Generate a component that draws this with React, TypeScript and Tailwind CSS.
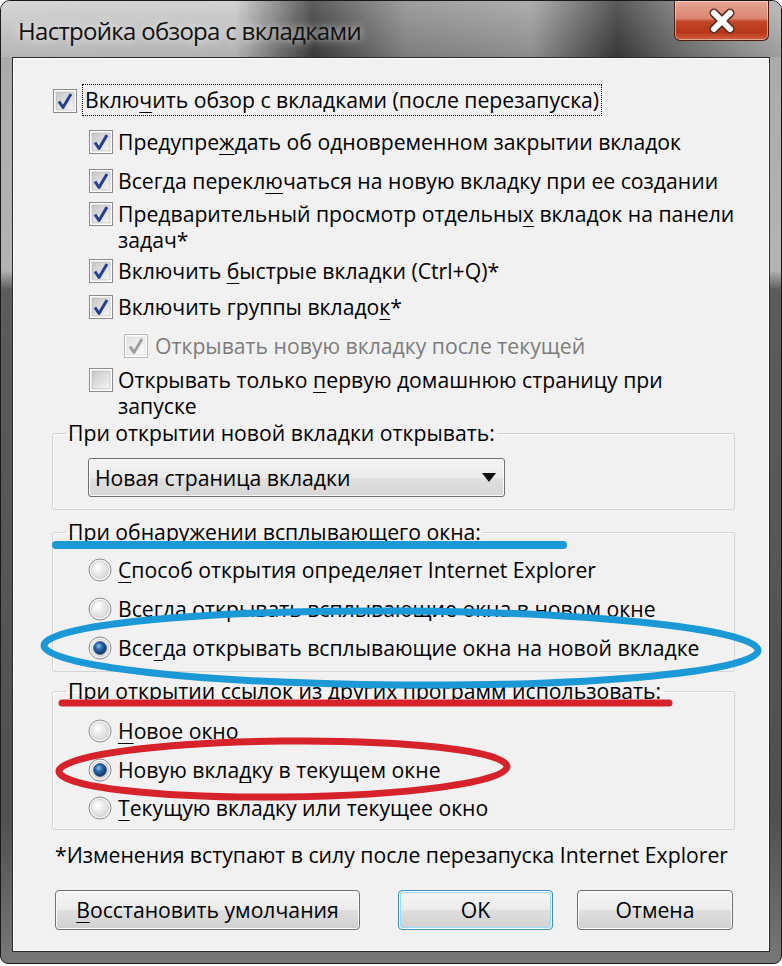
import React from "react";

const FONT = { fontFamily: '"Open Sans", "Noto Sans", "DejaVu Sans", sans-serif' };

function U({ children }: { children: React.ReactNode }) {
  return <span className="underline decoration-1 underline-offset-[4px]">{children}</span>;
}

function CheckBox({ checked = false, disabled = false }: { checked?: boolean; disabled?: boolean }) {
  return (
    <svg width="24" height="24" viewBox="0 0 24 24" className="mt-[1px] shrink-0">
      <defs>
        <linearGradient id={disabled ? "cbd" : "cb"} x1="0" y1="0" x2="1" y2="1">
          <stop offset="0" stopColor={disabled ? "#e2e2e2" : "#c6c6c6"} />
          <stop offset="1" stopColor={disabled ? "#fafafa" : "#f6f6f6"} />
        </linearGradient>
      </defs>
      <rect x="0.5" y="0.5" width="23" height="23" fill="#ffffff" stroke={disabled ? "#b9b9b9" : "#8a8a8a"} />
      <rect x="3" y="3" width="18" height="18" fill={`url(#${disabled ? "cbd" : "cb"})`} stroke={disabled ? "#d4d4d4" : "#b0b0b0"} strokeWidth="0.6" />
      {checked && (
        <path
          d="M6 12.5 L10 18.5 L18 5"
          fill="none"
          stroke={disabled ? "#9e9e9e" : "#26408f"}
          strokeWidth="3"
          strokeLinejoin="round"
        />
      )}
    </svg>
  );
}

function Radio({ selected = false }: { selected?: boolean }) {
  return (
    <svg width="24" height="24" viewBox="0 0 24 24" className="mt-[1px] shrink-0">
      <defs>
        <radialGradient id="rb" cx="0.35" cy="0.35" r="0.8">
          <stop offset="0" stopColor="#ffffff" />
          <stop offset="1" stopColor="#d2d2d2" />
        </radialGradient>
        <radialGradient id="rdot" cx="0.4" cy="0.35" r="0.7">
          <stop offset="0" stopColor="#8ec8f0" />
          <stop offset="0.4" stopColor="#2865a8" />
          <stop offset="1" stopColor="#0e3260" />
        </radialGradient>
      </defs>
      <circle cx="12" cy="12" r="11" fill="#f4f4f4" stroke="#8c8c8c" />
      <circle cx="12" cy="12" r="8.6" fill="url(#rb)" stroke="#c4c4c4" strokeWidth="0.6" />
      {selected && <circle cx="12" cy="12" r="6.4" fill="url(#rdot)" stroke="#1d3f66" strokeWidth="0.7" />}
    </svg>
  );
}

function CheckRow({
  children,
  checked,
  disabled,
  indent,
  mt,
}: {
  children: React.ReactNode;
  checked?: boolean;
  disabled?: boolean;
  indent: string;
  mt: string;
}) {
  return (
    <div className={`flex items-start ${indent} ${mt}`}>
      <CheckBox checked={checked} disabled={disabled} />
      <div className={`${disabled ? "ml-[7px] text-[#7c7c7c]" : "ml-[5px] text-black"}`}>{children}</div>
    </div>
  );
}

function RadioRow({ children, selected, mt }: { children: React.ReactNode; selected?: boolean; mt: string }) {
  return (
    <div className={`ml-[35px] flex items-start ${mt}`}>
      <Radio selected={selected} />
      <div className="ml-[6px]">{children}</div>
    </div>
  );
}

function Group({ title, mt, pb, children }: { title: string; mt: string; pb: string; children: React.ReactNode }) {
  return (
    <fieldset className={`ml-[39px] w-[683px] rounded-[3px] border border-[#d5d5d5] shadow-[inset_1px_1px_0_#ffffff] ${mt} ${pb}`}>
      <legend className="ml-[13px] px-[2px] text-black">{title}</legend>
      {children}
    </fieldset>
  );
}

function Button({ children, w, primary }: { children: React.ReactNode; w: string; primary?: boolean }) {
  return (
    <div
      className={`flex h-[40px] ${w} items-center justify-center rounded-[4px] border ${
        primary
          ? "border-[#3c8dbe] shadow-[inset_0_0_0_1px_#ffffff,inset_0_0_0_2px_#9fdcf3]"
          : "border-[#707070] shadow-[inset_0_0_0_1px_#fbfbfb]"
      } bg-[linear-gradient(180deg,#f4f4f4_0%,#ececec_48%,#dedede_52%,#d0d0d0_100%)] text-black`}
    >
      {children}
    </div>
  );
}

export default function App() {
  return (
    <div className="relative h-[966px] w-[782px] overflow-hidden bg-white text-[21.2px] leading-[26px]" style={FONT}>
      <div className="flex h-[964px] w-[782px] flex-col overflow-hidden rounded-t-[10px] rounded-b-[8px] border border-[#1a1a1a] bg-[linear-gradient(180deg,#a8a8a8_0%,#b4b4b4_28%,#5c5c5c_30%,#505050_85%,#777777_100%)]">
        {/* title bar */}
        <div className="relative flex h-[56px] shrink-0 items-center bg-[linear-gradient(90deg,#cfcfcf_0%,#cacaca_30%,#404040_40%,#8e8e8e_52%,#a0a0a0_68%,#3e3e3e_79%,#767676_87%,#b4b4b4_100%)]">
          <div className="absolute inset-0 bg-[linear-gradient(180deg,rgba(255,255,255,0.15)_0%,rgba(0,0,0,0.12)_100%)]" />
          <span
            className="relative ml-[17px] mt-[4px] text-[24px] tracking-[-0.7px] text-[#111111] [text-shadow:0_0_8px_rgba(255,255,255,0.9)]"
            style={FONT}
          >
            Настройка обзора с вкладками
          </span>
          <div className="absolute right-[12px] top-0 flex h-[40px] w-[95px] items-center justify-center rounded-b-[6px] border border-t-0 border-[#4a1e16] bg-[linear-gradient(180deg,#e7a596_0%,#d98770_45%,#c4472a_52%,#b83618_80%,#d2603c_100%)] shadow-[inset_0_0_0_1px_rgba(255,255,255,0.45)]">
            <svg width="32" height="26" viewBox="0 0 32 26">
              <path d="M8 5 L24 21 M24 5 L8 21" stroke="#5a2a20" strokeWidth="9" strokeLinecap="round" />
              <path d="M8 5 L24 21 M24 5 L8 21" stroke="#ffffff" strokeWidth="6" strokeLinecap="round" />
            </svg>
          </div>
        </div>

        {/* client area */}
        <div className="mx-[11px] mb-[11px] flex flex-1 flex-col border border-[#2a2a2a] bg-[#f1f1f1] shadow-[inset_0_0_0_1px_#ffffff]">
          <div className="ml-[40px] mt-[29px] flex h-[26px] items-center">
            <CheckBox checked />
            <span className="ml-[5px] border border-dotted border-black px-[2px] py-[2px] text-black">
              Вклю<U>ч</U>ить обзор с вкладками (после перезапуска)
            </span>
          </div>

          <CheckRow checked indent="ml-[76px]" mt="mt-[16px]">
            Предупре<U>ж</U>дать об одновременном закрытии вкладок
          </CheckRow>
          <CheckRow checked indent="ml-[76px]" mt="mt-[13px]">
            Всегда перекл<U>ю</U>чаться на новую вкладку при ее создании
          </CheckRow>
          <CheckRow checked indent="ml-[76px]" mt="mt-[7px]">
            Предварительный просмотр отдельны<U>х</U> вкладок на панели
            <br />
            задач*
          </CheckRow>
          <CheckRow checked indent="ml-[76px]" mt="mt-[5px]">
            Включить <U>б</U>ыстрые вкладки (Ctrl+Q)*
          </CheckRow>
          <CheckRow checked indent="ml-[76px]" mt="mt-[10px]">
            Включить группы вкладо<U>к</U>*
          </CheckRow>
          <CheckRow checked disabled indent="ml-[111px]" mt="mt-[13px]">
            Открывать новую вкладку после текущей
          </CheckRow>
          <CheckRow indent="ml-[76px]" mt="mt-[8px]">
            Открывать только <U>п</U>ервую домашнюю страницу при
            <br />
            запуске
          </CheckRow>

          <Group title="При открытии новой вкладки открывать:" mt="mt-[1px]" pb="pb-[12px]">
            <div className="ml-[35px] mt-[12px] flex h-[39px] w-[417px] items-center justify-between rounded-[3px] border border-[#707070] bg-[linear-gradient(180deg,#f3f3f3_0%,#ececec_50%,#e0e0e0_52%,#d6d6d6_100%)] pl-[6px] pr-[8px] shadow-[inset_0_0_0_1px_#fafafa]">
              <span className="text-black">Новая страница вкладки</span>
              <svg width="14" height="9" viewBox="0 0 14 9">
                <polygon points="0,0 14,0 7,9" fill="#111111" />
              </svg>
            </div>
          </Group>

          <Group title="При обнаружении всплывающего окна:" mt="mt-[9px]" pb="pb-[10px]">
            <RadioRow mt="mt-[12px]">
              <U>С</U>пособ открытия определяет Internet Explorer
            </RadioRow>
            <RadioRow mt="mt-[13px]">
              Всегда открывать всплывающие окна в новом окн<U>е</U>
            </RadioRow>
            <RadioRow selected mt="mt-[13px]">
              Все<U>г</U>да открывать всплывающие окна на новой вкладке
            </RadioRow>
          </Group>

          <Group title="При открытии ссылок из других программ использовать:" mt="mt-[6px]" pb="pb-[8px]">
            <RadioRow mt="mt-[14px]">
              <U>Н</U>овое окно
            </RadioRow>
            <RadioRow selected mt="mt-[13px]">
              Новую вкла<U>д</U>ку в текущем окне
            </RadioRow>
            <RadioRow mt="mt-[12px]">
              <U>Т</U>екущую вкладку или текущее окно
            </RadioRow>
          </Group>

          <div className="ml-[42px] mt-[12px] text-black">*Изменения вступают в силу после перезапуска Internet Explorer</div>

          <div className="ml-[42px] mt-[22px] flex">
            <Button w="w-[305px]">
              <span>
                <U>В</U>осстановить умолчания
              </span>
            </Button>
            <div className="ml-[38px]">
              <Button w="w-[155px]" primary>
                OK
              </Button>
            </div>
            <div className="ml-[24px]">
              <Button w="w-[156px]">Отмена</Button>
            </div>
          </div>
        </div>
      </div>

      {/* hand-drawn annotations over the dialog */}
      <svg className="pointer-events-none absolute inset-0" width="782" height="966" viewBox="0 0 782 966">
        <line x1="56" y1="545" x2="563" y2="545" stroke="#1b98d6" strokeWidth="8" strokeLinecap="round" />
        <ellipse cx="401" cy="648" rx="357" ry="37" fill="none" stroke="#1b98d6" strokeWidth="7" transform="rotate(0.4 401 648)" />
        <line x1="62" y1="703" x2="669" y2="703" stroke="#d6222b" strokeWidth="7" strokeLinecap="round" />
        <ellipse cx="283" cy="769" rx="224" ry="28" fill="none" stroke="#d6222b" strokeWidth="7" transform="rotate(-0.6 283 769)" />
      </svg>
    </div>
  );
}
